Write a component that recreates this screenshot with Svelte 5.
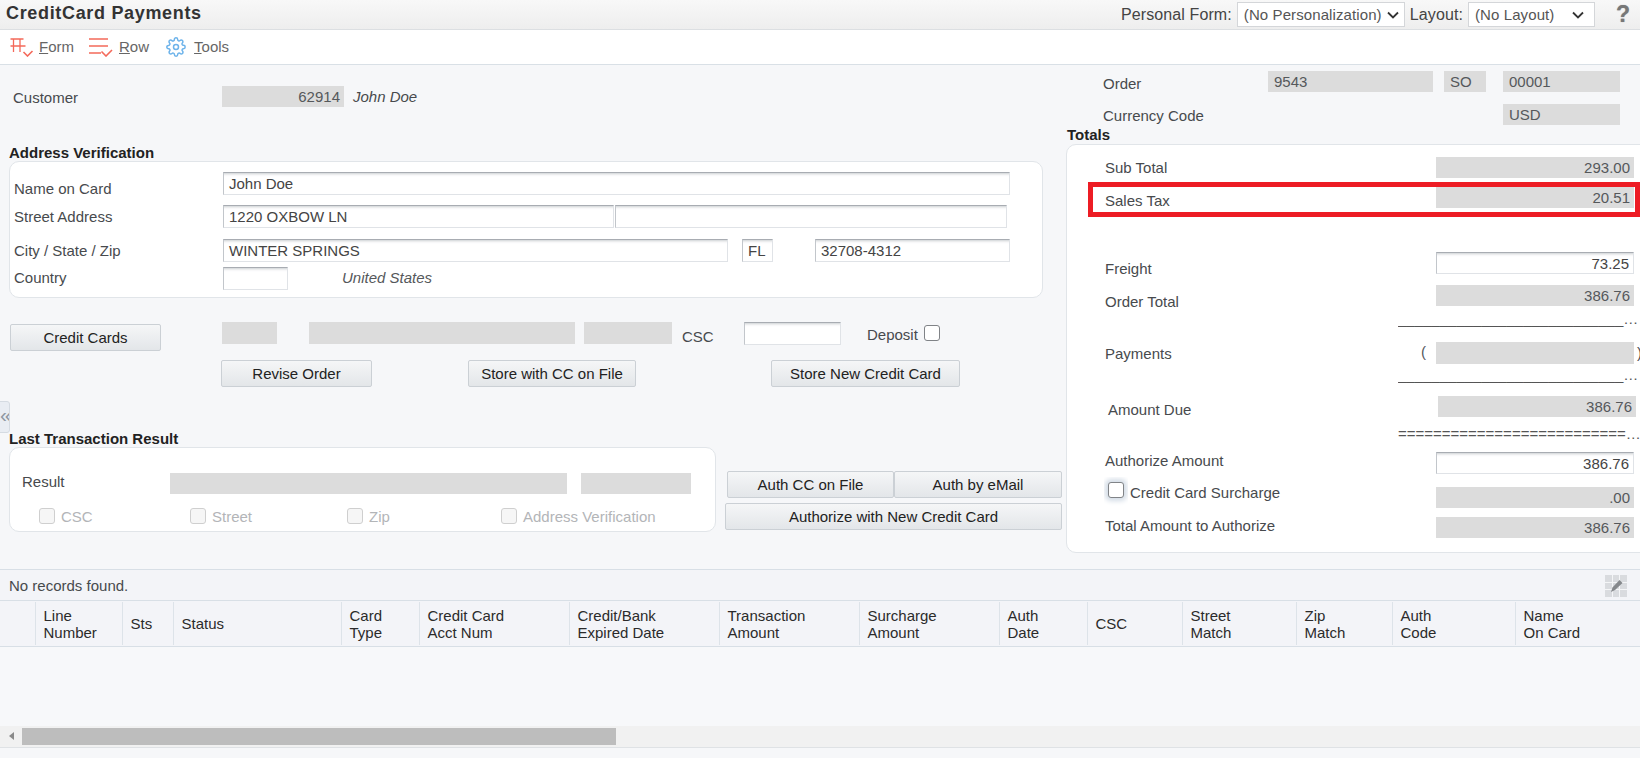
<script>
  const columns = [
    ['', ''],
    ['Line', 'Number'],
    ['Sts'],
    ['Status'],
    ['Card', 'Type'],
    ['Credit Card', 'Acct Num'],
    ['Credit/Bank', 'Expired Date'],
    ['Transaction', 'Amount'],
    ['Surcharge', 'Amount'],
    ['Auth', 'Date'],
    ['CSC'],
    ['Street', 'Match'],
    ['Zip', 'Match'],
    ['Auth', 'Code'],
    ['Name', 'On Card']
  ];
</script>

<div class="page">
  <header class="titlebar">
    <h1>CreditCard Payments</h1>
    <div class="personal">
      <span class="pick-label">Personal Form:</span>
      <div class="pick pick-form">
        <span>(No Personalization)</span>
        <svg width="12" height="8" viewBox="0 0 12 8"><path d="M1 1.5l5 5 5-5" fill="none" stroke="#333" stroke-width="1.8" /></svg>
      </div>
      <span class="pick-label layout-label">Layout:</span>
      <div class="pick pick-layout">
        <span>(No Layout)</span>
        <svg width="12" height="8" viewBox="0 0 12 8"><path d="M1 1.5l5 5 5-5" fill="none" stroke="#333" stroke-width="1.8" /></svg>
      </div>
      <span class="help">?</span>
    </div>
  </header>

  <nav class="toolbar">
    <div class="tool tool-form">
      <svg width="24" height="20" viewBox="0 0 24 20" fill="none" stroke="#f4695a" stroke-width="1.3">
        <path d="M0.5 2h13M0.5 9h15M3.5 2v13M10 2v13" />
        <path d="M13.5 15l4 4 5-5" stroke-width="1.6" />
      </svg>
      <span><u>F</u>orm</span>
    </div>
    <div class="tool tool-row">
      <svg width="24" height="20" viewBox="0 0 24 20" fill="none" stroke="#f4695a" stroke-width="1.3">
        <path d="M0 2h19M0 9h19M0 16h12" />
        <path d="M12.5 14.5l4.5 4.5 6-6" stroke-width="1.6" />
      </svg>
      <span><u>R</u>ow</span>
    </div>
    <div class="tool tool-tools">
      <svg width="20" height="20" viewBox="0 0 24 24" fill="none" stroke="#6db3ea" stroke-width="1.8">
        <circle cx="12" cy="12" r="3" />
        <path d="M19.4 15a1.65 1.65 0 0 0 .33 1.82l.06.06a2 2 0 0 1 0 2.83 2 2 0 0 1-2.83 0l-.06-.06a1.65 1.65 0 0 0-1.82-.33 1.65 1.65 0 0 0-1 1.51V21a2 2 0 0 1-2 2 2 2 0 0 1-2-2v-.09A1.65 1.65 0 0 0 9 19.4a1.65 1.65 0 0 0-1.82.33l-.06.06a2 2 0 0 1-2.83 0 2 2 0 0 1 0-2.83l.06-.06a1.65 1.65 0 0 0 .33-1.82 1.65 1.65 0 0 0-1.51-1H3a2 2 0 0 1-2-2 2 2 0 0 1 2-2h.09A1.65 1.65 0 0 0 4.6 9a1.65 1.65 0 0 0-.33-1.82l-.06-.06a2 2 0 0 1 0-2.83 2 2 0 0 1 2.83 0l.06.06a1.65 1.65 0 0 0 1.82.33H9a1.65 1.65 0 0 0 1-1.51V3a2 2 0 0 1 2-2 2 2 0 0 1 2 2v.09a1.65 1.65 0 0 0 1 1.51 1.65 1.65 0 0 0 1.82-.33l.06-.06a2 2 0 0 1 2.83 0 2 2 0 0 1 0 2.83l-.06.06a1.65 1.65 0 0 0-.33 1.82V9a1.65 1.65 0 0 0 1.51 1H21a2 2 0 0 1 2 2 2 2 0 0 1-2 2h-.09a1.65 1.65 0 0 0-1.51 1z" />
      </svg>
      <span><u>T</u>ools</span>
    </div>
  </nav>

  <main class="form">
    <section class="left">
      <div class="collapse-tab">«</div>

      <div class="cust-row">
        <span class="cust-label">Customer</span>
        <div class="ro right-text cust-no">62914</div>
        <em class="cust-name">John Doe</em>
      </div>

      <div class="sec-title addr-title">Address Verification</div>
      <div class="panel addr-panel">
        <div class="a-row a-name">
          <span class="a-label">Name on Card</span>
          <div class="in w-name">John Doe</div>
        </div>
        <div class="a-row a-street">
          <span class="a-label">Street Address</span>
          <div class="in w-street1">1220 OXBOW LN</div>
          <div class="in w-street2"></div>
        </div>
        <div class="a-row a-city">
          <span class="a-label">City / State / Zip</span>
          <div class="in w-city">WINTER SPRINGS</div>
          <div class="in w-state">FL</div>
          <div class="in w-zip">32708-4312</div>
        </div>
        <div class="a-row a-country">
          <span class="a-label">Country</span>
          <div class="in w-country"></div>
          <em class="country-name">United States</em>
        </div>
      </div>

      <div class="cards-row">
        <button class="btn b-cards">Credit Cards</button>
        <div class="ro g1"></div>
        <div class="ro g2"></div>
        <div class="ro g3"></div>
        <span class="csc-label">CSC</span>
        <div class="in w-csc"></div>
        <span class="deposit-label">Deposit</span>
        <input class="cb deposit-cb" type="checkbox" />
      </div>

      <div class="store-row">
        <button class="btn b-revise">Revise Order</button>
        <button class="btn b-store">Store with CC on File</button>
        <button class="btn b-new">Store New Credit Card</button>
      </div>

      <div class="ltr-row">
        <div class="ltr">
          <div class="sec-title ltr-title">Last Transaction Result</div>
          <div class="panel ltr-panel">
            <div class="res-row">
              <span class="res-label">Result</span>
              <div class="ro res1"></div>
              <div class="ro res2"></div>
            </div>
            <div class="checks">
              <label class="chk"><input class="cb off" type="checkbox" disabled />CSC</label>
              <label class="chk"><input class="cb off" type="checkbox" disabled />Street</label>
              <label class="chk"><input class="cb off" type="checkbox" disabled />Zip</label>
              <label class="chk"><input class="cb off" type="checkbox" disabled />Address Verification</label>
            </div>
          </div>
        </div>
        <div class="auth">
          <div class="auth-top">
            <button class="btn b-auth1">Auth CC on File</button>
            <button class="btn b-auth2">Auth by eMail</button>
          </div>
          <button class="btn b-auth3">Authorize with New Credit Card</button>
        </div>
      </div>
    </section>

    <section class="right">
      <div class="o-row o-order">
        <span class="o-label">Order</span>
        <div class="ro o1">9543</div>
        <div class="ro o2">SO</div>
        <div class="ro o3">00001</div>
      </div>
      <div class="o-row o-currency">
        <span class="o-label">Currency Code</span>
        <div class="ro o4">USD</div>
      </div>

      <div class="sec-title totals-title">Totals</div>
      <div class="panel totals">
        <div class="highlight"></div>

        <div class="t-row r-sub"><span class="t-label">Sub Total</span><div class="ro amt">293.00</div></div>
        <div class="t-row r-tax"><span class="t-label">Sales Tax</span><div class="ro amt">20.51</div></div>
        <div class="t-row r-freight"><span class="t-label">Freight</span><div class="in amt in-amt">73.25</div></div>
        <div class="t-row r-total"><span class="t-label">Order Total</span><div class="ro amt">386.76</div></div>
        <div class="rule rule-1">______________________________</div>
        <div class="t-row r-pay">
          <span class="t-label">Payments</span>
          <span class="paren">(</span>
          <div class="ro amt"></div>
          <span class="paren-end">)</span>
        </div>
        <div class="rule rule-2">______________________________</div>
        <div class="t-row r-due"><span class="t-label">Amount Due</span><div class="ro amt">386.76</div></div>
        <div class="rule rule-3">==============================</div>
        <div class="t-row r-auth"><span class="t-label">Authorize Amount</span><div class="in amt in-amt">386.76</div></div>
        <div class="t-row r-sur">
          <label class="t-label sur-label"><span class="halo"><input class="cb" type="checkbox" /></span>Credit Card Surcharge</label>
          <div class="ro amt">.00</div>
        </div>
        <div class="t-row r-all"><span class="t-label">Total Amount to Authorize</span><div class="ro amt">386.76</div></div>
      </div>
    </section>
  </main>

  <section class="grid">
    <div class="grid-bar">
      <span>No records found.</span>
      <svg class="grid-edit" width="22" height="22" viewBox="0 0 22 22">
        <rect width="22" height="22" fill="#d9dbdf" />
        <path d="M0 7.5h22M0 14.5h22M7.5 0v22M14.5 0v22" stroke="#f4f5f7" stroke-width="1" />
        <path d="M6 17l1.5-4.5L14.5 5l3 3-7.5 7z" fill="#85888c" />
      </svg>
    </div>
    <div class="grid-head">
      {#each columns as col}
        <div class="col">
          {#each col as line}<span>{line}</span>{/each}
        </div>
      {/each}
    </div>
    <div class="grid-body"></div>
    <div class="scroll">
      <span class="scroll-arrow"></span>
      <div class="thumb"></div>
    </div>
  </section>
</div>

<style>
  :global(body) {
    margin: 0;
    background: #f6f7f9;
    overflow: hidden;
  }

  .page {
    width: 1640px;
    height: 758px;
    overflow: hidden;
    font-family: "Liberation Sans", Arial, sans-serif;
    font-size: 15px;
    color: #474a4d;
    background: #f6f7f9;
  }

  /* title bar */
  .titlebar {
    display: flex;
    align-items: center;
    height: 29px;
    padding-left: 6px;
    background: linear-gradient(#f8f8f8, #eeeeee);
    border-bottom: 1px solid #dcdfe2;
  }

  h1 {
    margin: 0 0 3px;
    font-size: 18px;
    font-weight: bold;
    letter-spacing: 0.67px;
    color: #333;
  }

  .personal {
    display: flex;
    align-items: center;
    margin-left: auto;
    font-size: 16px;
    color: #444;
  }

  .pick-label {
    letter-spacing: 0.1px;
    white-space: nowrap;
  }

  .pick {
    display: flex;
    align-items: center;
    justify-content: space-between;
    box-sizing: border-box;
    height: 25px;
    margin-left: 5px;
    padding: 0 6px;
    font-size: 15px;
    letter-spacing: 0.1px;
    background: #fff;
    border: 1px solid #d4d6d9;
    color: #555;
    white-space: nowrap;
  }

  .pick-form { width: 168px; padding-right: 5px; }
  .pick-layout { width: 127px; padding-right: 10px; }
  .layout-label { margin-left: 5px; }

  .help {
    width: 34px;
    margin-left: 11px;
    text-align: center;
    font-size: 23px;
    font-weight: bold;
    color: #777;
    text-shadow: 0 0 1px #999;
  }

  /* toolbar */
  .toolbar {
    display: flex;
    align-items: center;
    height: 34px;
    background: #fff;
    border-bottom: 1px solid #d9e0e6;
    color: #666;
  }

  .tool {
    display: flex;
    align-items: center;
  }

  .tool span { margin-top: -2px; }

  .tool-form { margin-left: 10px; gap: 5px; }
  .tool-row { margin-left: 15px; gap: 6px; }
  .tool-tools { margin-left: 17px; gap: 8px; }

  /* form area */
  .form {
    display: flex;
    height: 504px;
    border-bottom: 1px solid #d8dfe6;
    overflow: hidden;
  }

  .left {
    position: relative;
    flex: none;
    width: 1066px;
  }

  .right {
    flex: none;
    width: 590px;
  }

  .collapse-tab {
    position: absolute;
    left: -1px;
    top: 336px;
    box-sizing: border-box;
    width: 11px;
    height: 32px;
    line-height: 26px;
    font-size: 21px;
    text-align: right;
    overflow: hidden;
    color: #8f98a2;
    background: #e9edf3;
    border: 1px solid #d5dbe2;
    border-radius: 0 3px 3px 0;
  }

  .ro {
    box-sizing: border-box;
    height: 21px;
    line-height: 21px;
    padding: 0 6px;
    background: #dcdcdc;
    color: #55585b;
  }

  .right-text {
    text-align: right;
    padding: 0 4px;
  }

  .in {
    box-sizing: border-box;
    height: 23px;
    line-height: 21px;
    padding: 0 5px;
    background: #fff;
    border: 1px solid #e0e3e7;
    border-top-color: #a8acb2;
    border-left-color: #c2c6cb;
    box-shadow: inset 0 4px 3px -3px #c8ccd0;
    color: #444;
  }

  .panel {
    box-sizing: border-box;
    background: #fff;
    border: 1px solid #e1e5e9;
    border-radius: 10px;
  }

  .sec-title {
    height: 18px;
    line-height: 18px;
    font-weight: bold;
    color: #222;
  }

  .btn {
    box-sizing: border-box;
    height: 27px;
    padding: 0;
    font: inherit;
    color: #222;
    background: linear-gradient(#f5f6f7, #e3e6e9);
    border: 1px solid #cbd0d5;
    border-radius: 2px;
  }

  .cb {
    appearance: none;
    box-sizing: border-box;
    flex: none;
    width: 16px;
    height: 16px;
    margin: 0;
    background: #fff;
    border: 1.5px solid #808387;
    border-radius: 3px;
  }

  .cb.off {
    background: #f6f6f6;
    border: 1px solid #cfcfcf;
  }

  /* customer */
  .cust-row {
    display: flex;
    height: 21px;
    margin: 21px 0 0 13px;
  }

  .cust-label {
    width: 209px;
    padding-top: 3px;
  }

  .cust-no { width: 122px; }

  .cust-name {
    margin-left: 9px;
    padding-top: 1px;
    line-height: 20px;
  }

  /* address panel */
  .addr-title {
    height: 17px;
    margin: 37px 0 0 9px;
  }

  .addr-panel {
    width: 1034px;
    height: 137px;
    margin-left: 9px;
    padding-left: 4px;
  }

  .a-row {
    display: flex;
    height: 23px;
    line-height: 23px;
  }

  .a-name { margin-top: 10px; }
  .a-street { margin-top: 10px; }
  .a-city { margin-top: 11px; }
  .a-country { margin-top: 5px; }

  .a-label {
    flex: none;
    width: 209px;
  }

  .a-name .a-label { padding-top: 5px; }
  .a-country .a-label { margin-top: -1px; }

  .w-name { width: 787px; }
  .w-street1 { width: 391px; }
  .w-street2 { width: 392px; margin-left: 1px; }
  .w-city { width: 505px; }
  .w-state { width: 31px; margin-left: 14px; }
  .w-zip { width: 195px; margin-left: 42px; }
  .w-country { width: 65px; }

  .country-name {
    margin: -1px 0 0 54px;
    color: #55585b;
  }

  /* credit cards row */
  .cards-row {
    display: flex;
    height: 29px;
    margin-top: 24px;
  }

  .b-cards { width: 151px; margin: 2px 0 0 10px; }
  .g1 { width: 55px; height: 22px; margin-left: 61px; }
  .g2 { width: 266px; height: 22px; margin-left: 32px; }
  .g3 { width: 88px; height: 22px; margin-left: 9px; }

  .csc-label {
    width: 62px;
    margin-left: 10px;
    padding-top: 6px;
  }

  .w-csc { width: 97px; }

  .deposit-label {
    width: 57px;
    margin-left: 26px;
    padding-top: 4px;
  }

  .deposit-cb { margin-top: 3px; }

  .store-row {
    display: flex;
    margin-top: 9px;
  }

  .b-revise { width: 151px; margin-left: 221px; }
  .b-store { width: 168px; margin-left: 96px; }
  .b-new { width: 189px; margin-left: 135px; }

  /* last transaction */
  .ltr-row {
    display: flex;
    margin-top: 42px;
  }

  .ltr { margin-left: 9px; }

  .ltr-title {
    height: 17px;
    margin-top: 1px;
  }

  .ltr-panel {
    width: 707px;
    height: 85px;
  }

  .res-row {
    display: flex;
    margin: 25px 0 0 12px;
  }

  .res-label { width: 148px; line-height: 18px; }
  .res1 { width: 397px; }
  .res2 { width: 110px; margin-left: 14px; }

  .checks {
    display: grid;
    grid-template-columns: 151px 157px 154px auto;
    margin: 13px 0 0 29px;
    color: #b3b5b8;
  }

  .chk {
    display: flex;
    align-items: center;
    gap: 6px;
    height: 18px;
  }

  .auth {
    display: flex;
    flex-direction: column;
    gap: 5px;
    width: 337px;
    margin: 42px 0 0 9px;
  }

  .auth-top {
    display: flex;
    padding-left: 2px;
  }

  .b-auth1 { width: 167px; }
  .b-auth2 { width: 168px; }
  .b-auth3 { width: 337px; }

  /* order block */
  .o-row {
    display: flex;
    height: 21px;
    padding-left: 37px;
  }

  .o-order { margin-top: 6px; }
  .o-currency { margin-top: 12px; }

  .o-label {
    flex: none;
    width: 165px;
    padding-top: 4px;
  }

  .o-currency .o-label { padding-top: 3px; }

  .o1 { width: 165px; }
  .o2 { width: 42px; margin-left: 11px; }
  .o3, .o4 { width: 117px; margin-left: 17px; }
  .o4 { margin-left: 235px; }

  /* totals */
  .totals-title { margin: 1px 0 0 1px; }

  .totals {
    position: relative;
    width: 590px;
    height: 409px;
    padding-top: 12px;
  }

  .highlight {
    position: absolute;
    left: 21px;
    top: 37px;
    width: 552px;
    height: 35px;
    box-sizing: border-box;
    border: 5px solid #ed1c24;
    pointer-events: none;
  }

  .t-row {
    display: flex;
    height: 21px;
    padding-left: 38px;
  }

  .t-label {
    flex: none;
    width: 331px;
    line-height: 21px;
  }

  .amt {
    width: 198px;
    padding: 0 4px;
    text-align: right;
  }

  .in-amt {
    height: 22px;
  }

  .r-tax { margin-top: 9px; }
  .r-tax .t-label { margin-top: 3px; }
  .r-freight { margin-top: 44px; }
  .r-freight .t-label { margin-top: 6px; }
  .r-total { margin-top: 12px; }
  .r-total .t-label { margin-top: 6px; }

  .rule {
    box-sizing: border-box;
    width: 244px;
    height: 18px;
    line-height: 18px;
    margin-left: 331px;
    white-space: nowrap;
    overflow: hidden;
    text-overflow: ellipsis;
    color: #555;
  }

  .rule-1 { margin-top: 4px; }
  .rule-2 { margin-top: 2px; }
  .rule-3 { margin-top: 8px; }

  .r-pay { margin-top: 14px; height: 22px; }
  .r-pay .t-label { width: 316px; margin-top: 1px; }
  .r-pay .amt { height: 22px; }

  .paren { width: 15px; line-height: 19px; color: #55585b; }
  .paren-end { margin-left: 3px; line-height: 21px; }

  .r-due { margin-top: 12px; padding-left: 41px; }
  .r-due .t-label { margin-top: 3px; width: 330px; }

  .r-auth { margin-top: 9px; height: 22px; }
  .r-auth .t-label { margin-top: -2px; }

  .r-sur { margin-top: 13px; }

  .sur-label {
    position: relative;
    margin-top: -5px;
    padding-left: 25px;
    width: 306px;
  }

  .halo {
    position: absolute;
    left: -1px;
    top: -5px;
    display: flex;
    align-items: center;
    justify-content: center;
    width: 24px;
    height: 30px;
    overflow: hidden;
  }

  .halo .cb {
    margin-top: -5px;
    box-shadow: 0 0 5px 3px #d3dce6;
  }

  .r-all { margin-top: 9px; }
  .r-all .t-label { margin-top: -2px; }

  /* grid */
  .grid-bar {
    display: flex;
    align-items: center;
    justify-content: space-between;
    box-sizing: border-box;
    height: 31px;
    padding: 0 13px 0 9px;
    background: #f3f4f8;
    border-bottom: 1px solid #d8dfe6;
  }

  .grid-edit { margin-top: 2px; }

  .grid-head {
    display: grid;
    grid-template-columns: 35px 87px 51px 168px 78px 150px 150px 140px 140px 88px 95px 114px 96px 123px 1fr;
    box-sizing: border-box;
    height: 46px;
    padding: 1px 0;
    background: #f3f4f8;
    border-bottom: 1px solid #d8dfe6;
    color: #2b2b2b;
    line-height: 17px;
  }

  .col {
    display: flex;
    flex-direction: column;
    justify-content: center;
    padding-left: 7.5px;
    border-left: 1px solid #dde3e9;
  }

  .col:first-child { border-left: 0; }

  .grid-body {
    height: 79px;
    background: #f7f8fa;
  }

  .scroll {
    display: flex;
    align-items: center;
    box-sizing: border-box;
    height: 22px;
    padding-bottom: 1px;
    background: #f1f1f1;
    border-bottom: 1px solid #dfe2e5;
  }

  .scroll-arrow {
    width: 0;
    height: 0;
    margin-left: 9px;
    border: 4px solid transparent;
    border-left: 0;
    border-right: 5px solid #8a8a8a;
  }

  .thumb {
    width: 594px;
    height: 17px;
    margin-left: 8px;
    background: #bdbdbd;
  }
</style>
